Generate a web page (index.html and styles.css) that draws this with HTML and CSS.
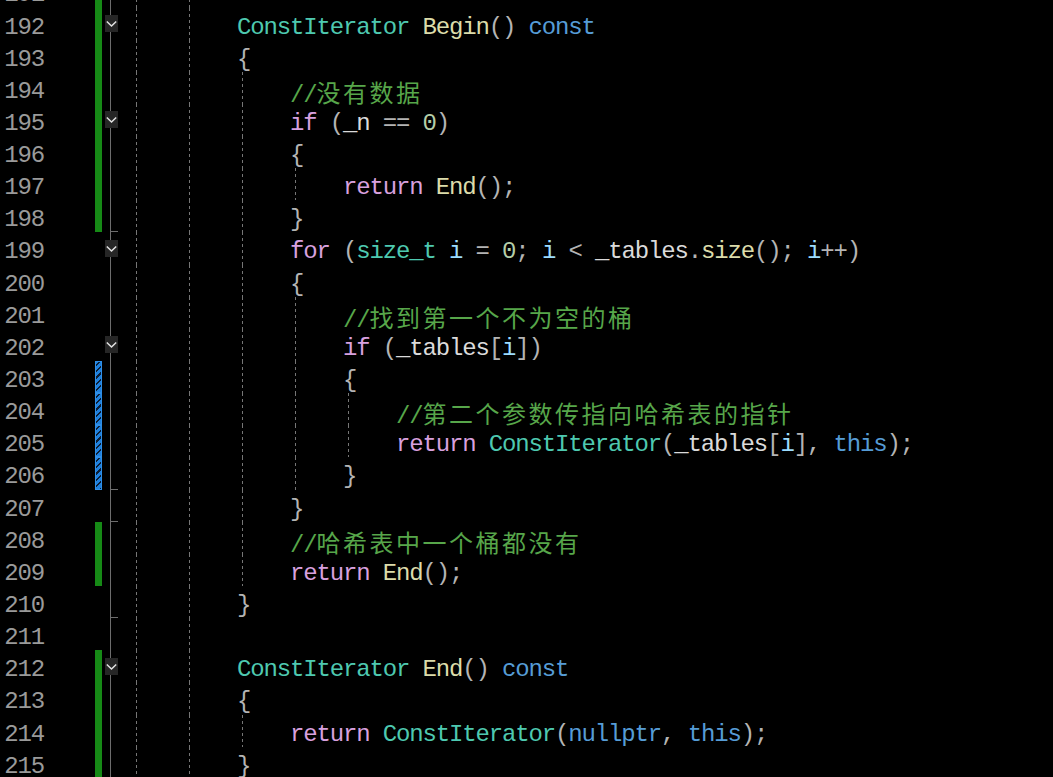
FILE: index.html
```html
<!DOCTYPE html>
<html lang="zh">
<head>
<meta charset="utf-8">
<title>Editor</title>
<link rel="stylesheet" href="styles.css">
</head>
<body>
<div class="editor">
  <div class="row"><span class="num">191</span><span class="chg green"></span><span class="fold"></span><span class="code"><span class="ind"></span><span class="ind"></span></span></div>
  <div class="row"><span class="num">192</span><span class="chg green"></span><span class="fold"><span class="box"><svg width="13" height="17" viewBox="0 0 13 17"><polyline points="1.8,6.5 6.5,11 11.2,6.5" fill="none" stroke="#e2e2e2" stroke-width="1.5"/></svg></span></span><span class="code"><span class="ind"></span><span class="ind"></span><span class="txt"><span class="ty">ConstIterator</span> <span class="fn">Begin</span><span class="p">()</span> <span class="kw">const</span></span></span></div>
  <div class="row"><span class="num">193</span><span class="chg green"></span><span class="fold"></span><span class="code"><span class="ind"></span><span class="ind"></span><span class="txt"><span class="p">{</span></span></span></div>
  <div class="row"><span class="num">194</span><span class="chg green"></span><span class="fold"></span><span class="code"><span class="ind"></span><span class="ind"></span><span class="ind"></span><span class="txt"><span class="cm">//<span class="cjk">没有数据</span></span></span></span></div>
  <div class="row"><span class="num">195</span><span class="chg green"></span><span class="fold"><span class="box"><svg width="13" height="17" viewBox="0 0 13 17"><polyline points="1.8,6.5 6.5,11 11.2,6.5" fill="none" stroke="#e2e2e2" stroke-width="1.5"/></svg></span></span><span class="code"><span class="ind"></span><span class="ind"></span><span class="ind"></span><span class="txt"><span class="ct">if</span><span class="p"> (</span><span class="mb">_n</span><span class="p"> == </span><span class="nu">0</span><span class="p">)</span></span></span></div>
  <div class="row"><span class="num">196</span><span class="chg green"></span><span class="fold"></span><span class="code"><span class="ind"></span><span class="ind"></span><span class="ind"></span><span class="txt"><span class="p">{</span></span></span></div>
  <div class="row"><span class="num">197</span><span class="chg green"></span><span class="fold"></span><span class="code"><span class="ind"></span><span class="ind"></span><span class="ind"></span><span class="ind"></span><span class="txt"><span class="ct">return</span> <span class="fn">End</span><span class="p">();</span></span></span></div>
  <div class="row"><span class="num">198</span><span class="chg green"></span><span class="fold end"></span><span class="code"><span class="ind"></span><span class="ind"></span><span class="ind"></span><span class="txt"><span class="p">}</span></span></span></div>
  <div class="row"><span class="num">199</span><span class="chg"></span><span class="fold"><span class="box"><svg width="13" height="17" viewBox="0 0 13 17"><polyline points="1.8,6.5 6.5,11 11.2,6.5" fill="none" stroke="#e2e2e2" stroke-width="1.5"/></svg></span></span><span class="code"><span class="ind"></span><span class="ind"></span><span class="ind"></span><span class="txt"><span class="ct">for</span><span class="p"> (</span><span class="ty">size_t</span> <span class="lo">i</span><span class="p"> = </span><span class="nu">0</span><span class="p">; </span><span class="lo">i</span><span class="p"> &lt; </span><span class="mb">_tables</span><span class="p">.</span><span class="fn">size</span><span class="p">(); </span><span class="lo">i</span><span class="p">++)</span></span></span></div>
  <div class="row"><span class="num">200</span><span class="chg"></span><span class="fold"></span><span class="code"><span class="ind"></span><span class="ind"></span><span class="ind"></span><span class="txt"><span class="p">{</span></span></span></div>
  <div class="row"><span class="num">201</span><span class="chg"></span><span class="fold"></span><span class="code"><span class="ind"></span><span class="ind"></span><span class="ind"></span><span class="ind"></span><span class="txt"><span class="cm">//<span class="cjk">找到第一个不为空的桶</span></span></span></span></div>
  <div class="row"><span class="num">202</span><span class="chg"></span><span class="fold"><span class="box"><svg width="13" height="17" viewBox="0 0 13 17"><polyline points="1.8,6.5 6.5,11 11.2,6.5" fill="none" stroke="#e2e2e2" stroke-width="1.5"/></svg></span></span><span class="code"><span class="ind"></span><span class="ind"></span><span class="ind"></span><span class="ind"></span><span class="txt"><span class="ct">if</span><span class="p"> (</span><span class="mb">_tables</span><span class="p">[</span><span class="lo">i</span><span class="p">])</span></span></span></div>
  <div class="row"><span class="num">203</span><span class="chg blue"></span><span class="fold"></span><span class="code"><span class="ind"></span><span class="ind"></span><span class="ind"></span><span class="ind"></span><span class="txt"><span class="p">{</span></span></span></div>
  <div class="row"><span class="num">204</span><span class="chg blue"></span><span class="fold"></span><span class="code"><span class="ind"></span><span class="ind"></span><span class="ind"></span><span class="ind"></span><span class="ind"></span><span class="txt"><span class="cm">//<span class="cjk">第二个参数传指向哈希表的指针</span></span></span></span></div>
  <div class="row"><span class="num">205</span><span class="chg blue"></span><span class="fold"></span><span class="code"><span class="ind"></span><span class="ind"></span><span class="ind"></span><span class="ind"></span><span class="ind"></span><span class="txt"><span class="ct">return</span> <span class="ty">ConstIterator</span><span class="p">(</span><span class="mb">_tables</span><span class="p">[</span><span class="lo">i</span><span class="p">], </span><span class="kw">this</span><span class="p">);</span></span></span></div>
  <div class="row"><span class="num">206</span><span class="chg blue"></span><span class="fold end"></span><span class="code"><span class="ind"></span><span class="ind"></span><span class="ind"></span><span class="ind"></span><span class="txt"><span class="p">}</span></span></span></div>
  <div class="row"><span class="num">207</span><span class="chg"></span><span class="fold end"></span><span class="code"><span class="ind"></span><span class="ind"></span><span class="ind"></span><span class="txt"><span class="p">}</span></span></span></div>
  <div class="row"><span class="num">208</span><span class="chg green"></span><span class="fold"></span><span class="code"><span class="ind"></span><span class="ind"></span><span class="ind"></span><span class="txt"><span class="cm">//<span class="cjk">哈希表中一个桶都没有</span></span></span></span></div>
  <div class="row"><span class="num">209</span><span class="chg green"></span><span class="fold"></span><span class="code"><span class="ind"></span><span class="ind"></span><span class="ind"></span><span class="txt"><span class="ct">return</span> <span class="fn">End</span><span class="p">();</span></span></span></div>
  <div class="row"><span class="num">210</span><span class="chg"></span><span class="fold end"></span><span class="code"><span class="ind"></span><span class="ind"></span><span class="txt"><span class="p">}</span></span></span></div>
  <div class="row"><span class="num">211</span><span class="chg"></span><span class="fold"></span><span class="code"><span class="ind"></span><span class="ind"></span></span></div>
  <div class="row"><span class="num">212</span><span class="chg green"></span><span class="fold"><span class="box"><svg width="13" height="17" viewBox="0 0 13 17"><polyline points="1.8,6.5 6.5,11 11.2,6.5" fill="none" stroke="#e2e2e2" stroke-width="1.5"/></svg></span></span><span class="code"><span class="ind"></span><span class="ind"></span><span class="txt"><span class="ty">ConstIterator</span> <span class="fn">End</span><span class="p">()</span> <span class="kw">const</span></span></span></div>
  <div class="row"><span class="num">213</span><span class="chg green"></span><span class="fold"></span><span class="code"><span class="ind"></span><span class="ind"></span><span class="txt"><span class="p">{</span></span></span></div>
  <div class="row"><span class="num">214</span><span class="chg green"></span><span class="fold"></span><span class="code"><span class="ind"></span><span class="ind"></span><span class="ind"></span><span class="txt"><span class="ct">return</span> <span class="ty">ConstIterator</span><span class="p">(</span><span class="kw">nullptr</span><span class="p">, </span><span class="kw">this</span><span class="p">);</span></span></span></div>
  <div class="row"><span class="num">215</span><span class="chg green"></span><span class="fold"></span><span class="code"><span class="ind"></span><span class="ind"></span><span class="txt"><span class="p">}</span></span></span></div>
</div>
</body>
</html>
```

FILE: styles.css
```css
html, body {
  margin: 0;
  padding: 0;
  background: #000;
  height: 100%;
  overflow: hidden;
}

.editor {
  margin-top: -24.65px;
  font-family: "Liberation Mono", "Noto Sans CJK SC", monospace;
  font-size: 24px;
  letter-spacing: -1.15px;
  color: #dadada;
}

.row {
  display: flex;
  height: 32.15px;
}

.num {
  flex: none;
  width: 44px;
  text-align: right;
  color: #9a9a9a;
  padding-top: 7px;
  line-height: 25.15px;
  box-sizing: border-box;
  white-space: pre;
}

.chg {
  flex: none;
  width: 7px;
  margin-left: 51px;
}

.chg.green {
  background: #168a16;
}

.chg.blue {
  background: repeating-linear-gradient(135deg, #1f80dc 0 3px, #0b1f38 3px 4.5px);
  box-shadow: inset 0 0 0 1px #2f8fe8;
}

.fold {
  flex: none;
  width: 16px;
  margin-left: 2px;
  display: flex;
  align-items: center;
  background: linear-gradient(#6d6d6d, #6d6d6d) no-repeat 6px 0 / 1px 100%;
}

.fold.end {
  background:
    linear-gradient(#6d6d6d, #6d6d6d) no-repeat 6px 0 / 1px 100%,
    linear-gradient(#6d6d6d, #6d6d6d) no-repeat 7px 100% / 7px 1px;
}

.box {
  width: 13px;
  height: 17px;
  margin-left: 1px;
  background: #262626;
  display: block;
}

.box svg {
  display: block;
}

.code {
  flex: 1;
  display: flex;
  margin-left: 11px;
}

.ind {
  flex: none;
  width: 53px;
  background: repeating-linear-gradient(to bottom, #767676 0 3px, transparent 3px 6px) no-repeat 5px 0 / 1px 100%;
}

.txt {
  white-space: pre;
  padding-top: 7px;
  line-height: 25.15px;
}

.ty { color: #4ec9b0; }
.fn { color: #dcdcaa; }
.kw { color: #569cd6; }
.ct { color: #d8a0df; }
.cm { color: #57a64a; }
.p  { color: #b4b4b4; }
.mb { color: #dadada; }
.lo { color: #9cdcfe; }
.nu { color: #b5cea8; }

.cjk {
  font-family: "Noto Sans CJK SC", sans-serif;
  letter-spacing: 2.5px;
}
```
